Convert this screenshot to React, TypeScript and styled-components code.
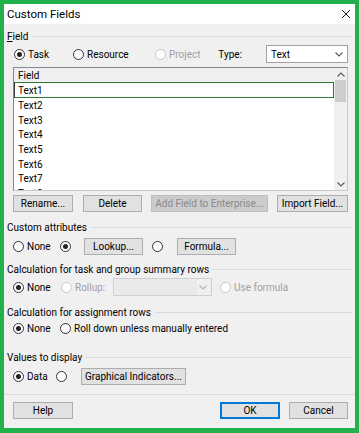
import React from "react";
import styled, { createGlobalStyle, css } from "styled-components";

const Global = createGlobalStyle`
  html, body { margin: 0; padding: 0; background: #22b14c; }
  * { box-sizing: border-box; }
`;

const FONT = `"Roboto", "Liberation Sans", sans-serif`;

const Window = styled.div`
  width: 359px;
  height: 433px;
  border: 4px solid #21b04b;
  border-bottom-width: 5px;
  background: #f0f0f0;
  display: flex;
  flex-direction: column;
  font-family: ${FONT};
  font-size: 10px;
  color: #000;
  overflow: hidden;
`;

const TitleBar = styled.div`
  height: 20px;
  background: #fff;
  display: flex;
  align-items: center;
  justify-content: space-between;
  padding: 0 4px 0 3px;
  font-size: 11.5px;
  flex: none;
`;

const Body = styled.div`
  display: flex;
  flex-direction: column;
  flex: 1;
`;

const GroupHeader = styled.div<{ $mt: number }>`
  display: flex;
  align-items: center;
  height: 14px;
  margin-top: ${(p) => p.$mt}px;
  padding: 0 3px;
  gap: 4px;
  font-size: 10px;
  &::after {
    content: "";
    flex: 1;
    height: 1px;
    background: #dadada;
  }
`;

const Row = styled.div<{ $mt: number; $h?: number }>`
  display: flex;
  align-items: center;
  height: ${(p) => p.$h ?? 18}px;
  margin-top: ${(p) => p.$mt}px;
  padding: 0 7px 0 9px;
`;

const Spacer = styled.div<{ $w: number }>`
  width: ${(p) => p.$w}px;
  flex: none;
`;

const RadioWrap = styled.label<{ $disabled?: boolean; $w?: number }>`
  display: flex;
  align-items: center;
  gap: 3px;
  color: ${(p) => (p.$disabled ? "#a0a0a0" : "#000")};
  width: ${(p) => (p.$w ? `${p.$w}px` : "auto")};
  flex: none;
  white-space: nowrap;
`;

const Circle = styled.span<{ $checked?: boolean; $disabled?: boolean }>`
  width: 11px;
  height: 11px;
  border-radius: 50%;
  border: 1px solid ${(p) => (p.$disabled ? "#c6c6c6" : "#333")};
  background: #fff;
  display: inline-flex;
  align-items: center;
  justify-content: center;
  flex: none;
  ${(p) =>
    p.$checked &&
    css`
      &::after {
        content: "";
        width: 5px;
        height: 5px;
        border-radius: 50%;
        background: #222;
      }
    `}
`;

const Radio: React.FC<{
  label?: string;
  checked?: boolean;
  disabled?: boolean;
  w?: number;
}> = ({ label, checked, disabled, w }) => (
  <RadioWrap $disabled={disabled} $w={w}>
    <Circle $checked={checked} $disabled={disabled} />
    {label && <span>{label}</span>}
  </RadioWrap>
);

const Button = styled.button<{ $w: number; $disabled?: boolean; $default?: boolean }>`
  width: ${(p) => p.$w}px;
  height: 17px;
  flex: none;
  font-family: ${FONT};
  font-size: 10px;
  padding: 0;
  border: 1px solid #adadad;
  background: #e1e1e1;
  color: #000;
  ${(p) =>
    p.$disabled &&
    css`
      background: #cccccc;
      border-color: #bfbfbf;
      color: #8a8a8a;
    `}
  ${(p) =>
    p.$default &&
    css`
      border-color: #0078d7;
      box-shadow: inset 0 0 0 1px #0078d7;
    `}
`;

const Select = styled.div<{ $w: number; $disabled?: boolean }>`
  width: ${(p) => p.$w}px;
  height: 18px;
  flex: none;
  border: 1px solid ${(p) => (p.$disabled ? "#d0d0d0" : "#a0a0a0")};
  background: ${(p) => (p.$disabled ? "#f0f0f0" : "#fff")};
  display: flex;
  align-items: center;
  justify-content: space-between;
  padding: 0 4px 0 4px;
`;

const SelectInner = styled.div`
  flex: 1;
  height: 100%;
  background: #eaeaea;
  margin-right: 2px;
  margin-left: -3px;
`;

const Chevron: React.FC<{ up?: boolean; color?: string }> = ({ up, color = "#555" }) => (
  <svg width="8" height="5" viewBox="0 0 8 5">
    <path
      d={up ? "M0.5 4.5 L4 1 L7.5 4.5" : "M0.5 0.5 L4 4 L7.5 0.5"}
      fill="none"
      stroke={color}
      strokeWidth="1.1"
    />
  </svg>
);

const ListBox = styled.div`
  margin: 2px 7px 0 9px;
  height: 124px;
  border: 1px solid #828790;
  border-right-color: #c8c8c8;
  border-bottom-color: #c8c8c8;
  background: #fff;
  display: flex;
  flex: none;
  overflow: hidden;
`;

const ListMain = styled.div`
  flex: 1;
  display: flex;
  flex-direction: column;
  overflow: hidden;
`;

const ListHeader = styled.div`
  height: 14px;
  flex: none;
  background: #f0f0f0;
  padding-left: 4px;
  display: flex;
  align-items: center;
`;

const ListRow = styled.div<{ $selected?: boolean }>`
  height: 14.7px;
  flex: none;
  display: flex;
  align-items: center;
  padding-left: 3px;
  border: 1px solid ${(p) => (p.$selected ? "#2e7a31" : "transparent")};
  ${(p) =>
    p.$selected &&
    css`
      height: 16px;
      border-left-color: #3a3a3a;
    `}
`;

const ScrollBar = styled.div`
  width: 13px;
  flex: none;
  background: #f0f0f0;
  display: flex;
  flex-direction: column;
  align-items: center;
  padding: 4px 0 3px;
`;

const Thumb = styled.div`
  width: 11px;
  height: 22px;
  background: #cdcdcd;
  margin-top: 3px;
`;

const ScrollFill = styled.div`
  flex: 1;
`;

const TypeLabel = styled.span`
  margin-left: auto;
  margin-right: 24px;
`;

const Separator = styled.div<{ $mt: number }>`
  height: 1px;
  background: #dadada;
  margin-top: ${(p) => p.$mt}px;
  flex: none;
`;

const Underline = styled.span`
  text-decoration: underline;
`;

const rows = ["Text1", "Text2", "Text3", "Text4", "Text5", "Text6", "Text7", "Text8"];

export default function App() {
  return (
    <>
      <Global />
      <Window>
        <TitleBar>
          <span>Custom Fields</span>
          <svg width="10" height="10" viewBox="0 0 10 10">
            <path d="M1 1 L9 9 M9 1 L1 9" stroke="#222" strokeWidth="1" />
          </svg>
        </TitleBar>
        <Body>
          <GroupHeader $mt={5}>
            <span>
              <Underline>F</Underline>ield
            </span>
          </GroupHeader>
          <Row $mt={0} $h={22}>
            <Spacer $w={1} />
            <Radio label="Task" checked w={59} />
            <Radio label="Resource" w={82} />
            <Radio label="Project" disabled />
            <TypeLabel>Type:</TypeLabel>
            <Select $w={82}>
              <span>Text</span>
              <Chevron />
            </Select>
          </Row>
          <ListBox>
            <ListMain>
              <ListHeader>Field</ListHeader>
              {rows.map((r, i) => (
                <ListRow key={r} $selected={i === 0}>
                  {r}
                </ListRow>
              ))}
            </ListMain>
            <ScrollBar>
              <Chevron up />
              <Thumb />
              <ScrollFill />
              <Chevron />
            </ScrollBar>
          </ListBox>
          <Row $mt={4} $h={17}>
            <Spacer $w={0} />
            <Button $w={60}>Rename...</Button>
            <Spacer $w={10} />
            <Button $w={59}>Delete</Button>
            <Spacer $w={9} />
            <Button $w={117} $disabled>
              Add Field to Enterprise...
            </Button>
            <Spacer $w={9} />
            <Button $w={71}>Import Field...</Button>
          </Row>
          <GroupHeader $mt={8}>
            <span>Custom attributes</span>
          </GroupHeader>
          <Row $mt={3}>
            <Radio label="None" w={47} />
            <Radio checked w={24} />
            <Button $w={59}>Lookup...</Button>
            <Spacer $w={9} />
            <Radio w={25} />
            <Button $w={59}>Formula...</Button>
          </Row>
          <GroupHeader $mt={7}>
            <span>Calculation for task and group summary rows</span>
          </GroupHeader>
          <Row $mt={2}>
            <Radio label="None" checked w={48} />
            <Radio label="Rollup:" disabled w={52} />
            <Select $w={99} $disabled>
              <SelectInner />
              <Chevron color="#b0b0b0" />
            </Select>
            <Spacer $w={8} />
            <Radio label="Use formula" disabled />
          </Row>
          <GroupHeader $mt={9}>
            <span>Calculation for assignment rows</span>
          </GroupHeader>
          <Row $mt={0}>
            <Radio label="None" checked w={47} />
            <Radio label="Roll down unless manually entered" />
          </Row>
          <GroupHeader $mt={13}>
            <span>Values to display</span>
          </GroupHeader>
          <Row $mt={3} $h={19}>
            <Radio label="Data" checked w={43} />
            <Radio w={25} />
            <Button $w={105}>Graphical Indicators...</Button>
          </Row>
          <Separator $mt={8} />
          <Row $mt={7} $h={17}>
            <Button $w={60}>Help</Button>
            <Spacer $w={147} />
            <Button $w={60} $default>
              OK
            </Button>
            <Spacer $w={9} />
            <Button $w={59}>Cancel</Button>
          </Row>
        </Body>
      </Window>
    </>
  );
}
